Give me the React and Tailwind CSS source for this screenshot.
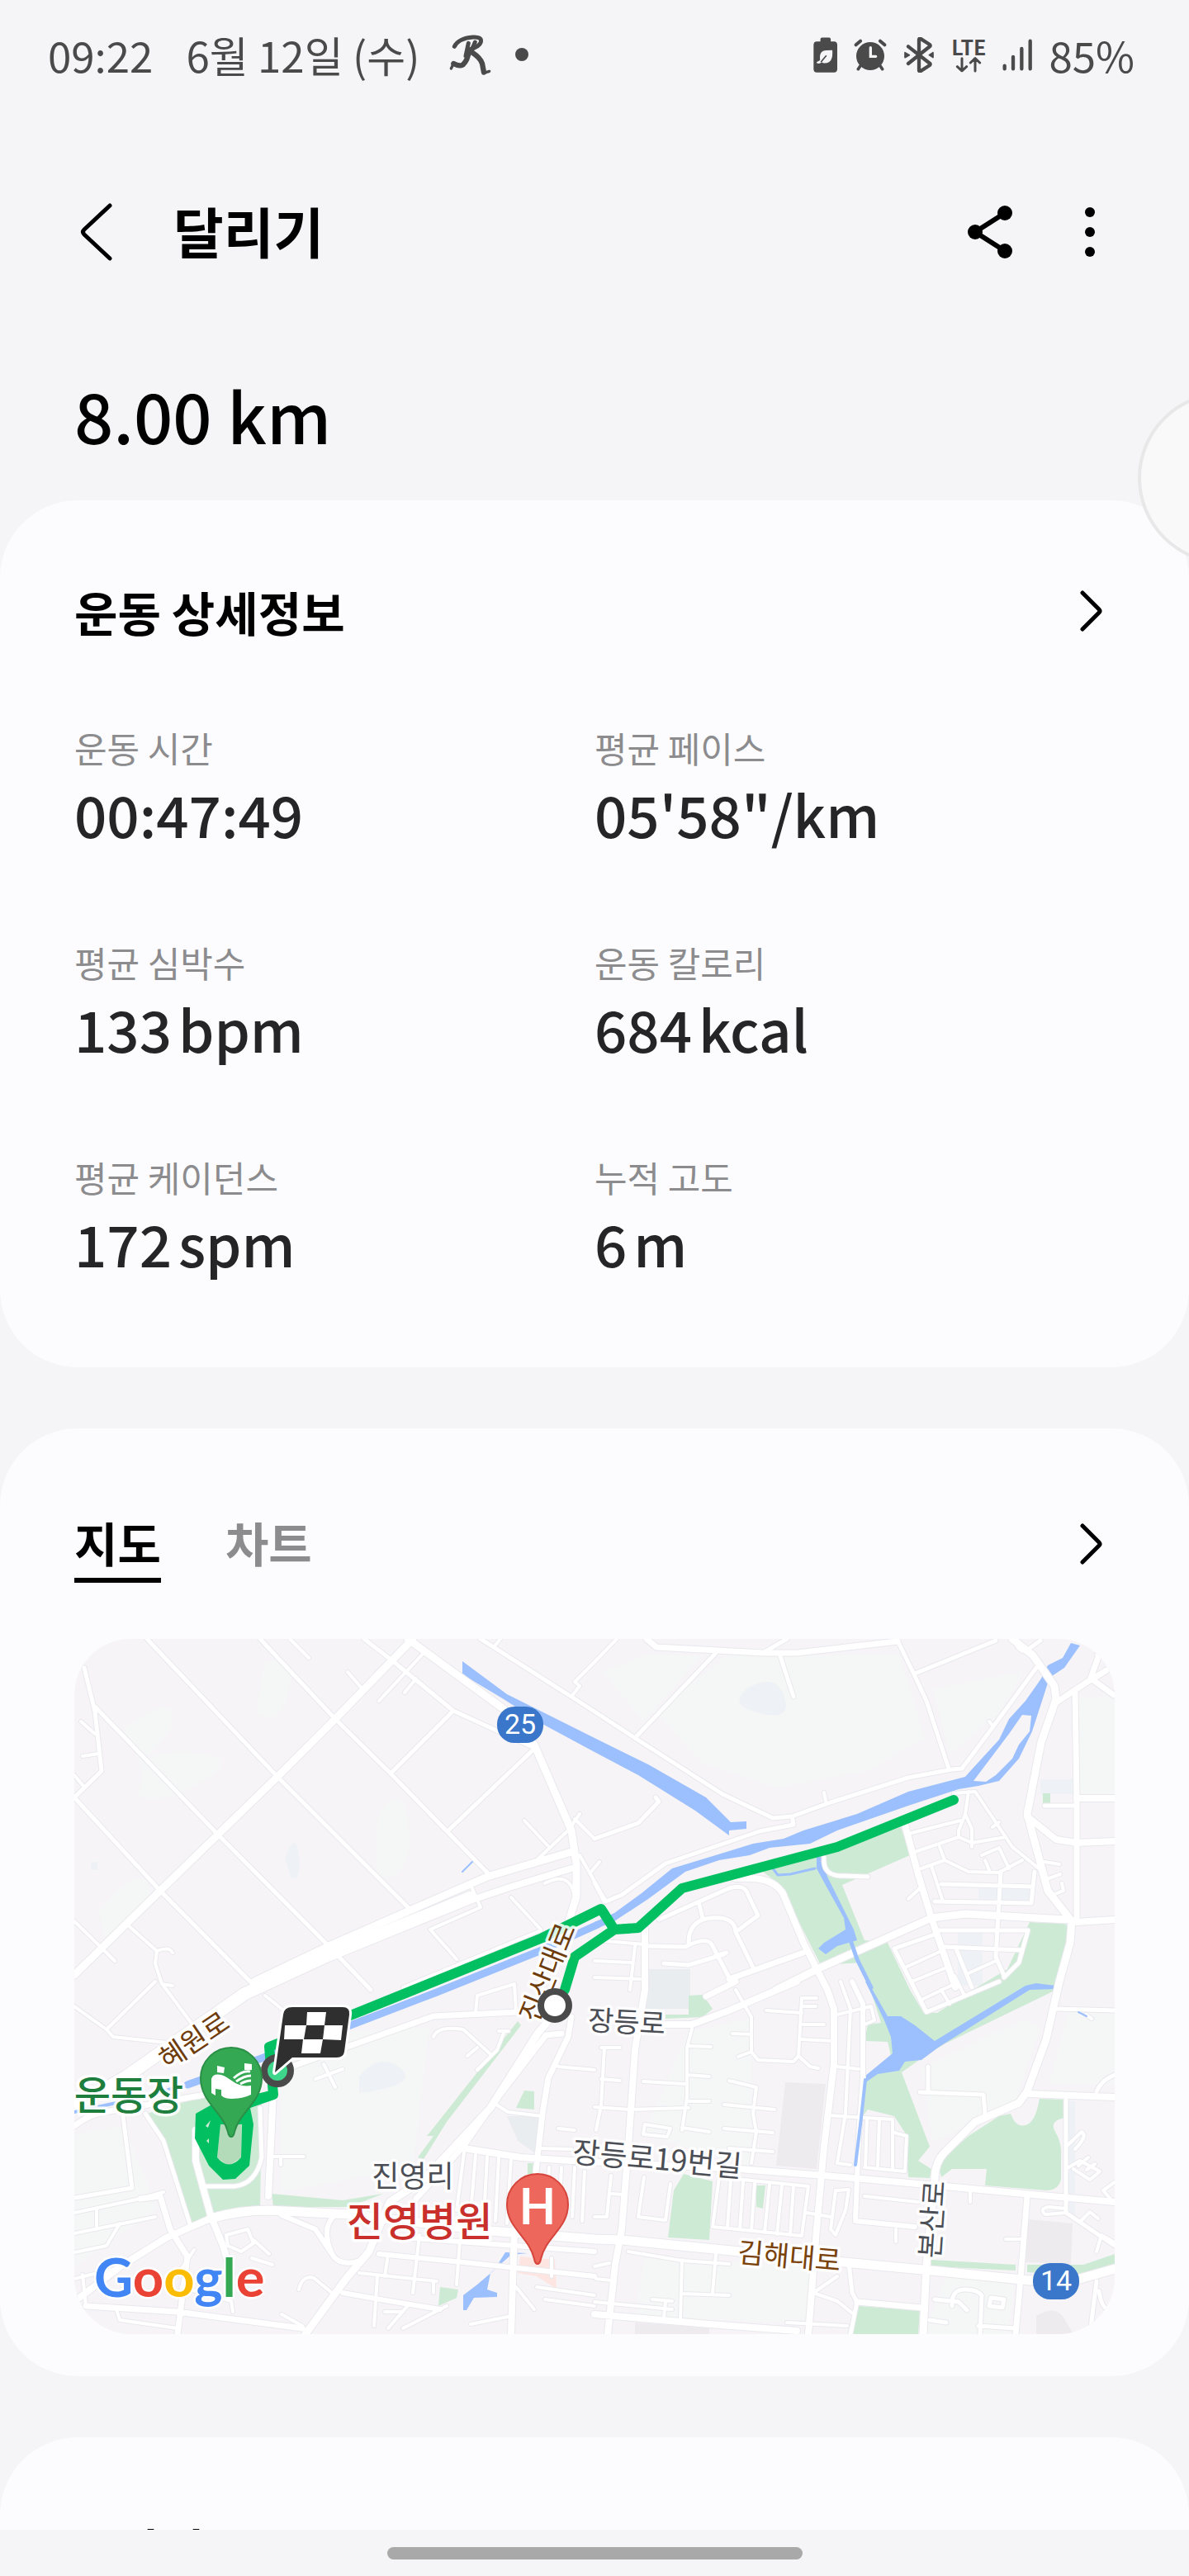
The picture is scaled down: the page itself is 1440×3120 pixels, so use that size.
import { useState } from 'react'

const stats = [
    { label: '운동 시간', value: '00:47:49' },
    { label: '평균 페이스', value: '05\'58"', unit: '/km', tight: true },
    { label: '평균 심박수', value: '133', unit: 'bpm' },
    { label: '운동 칼로리', value: '684', unit: 'kcal' },
    { label: '평균 케이던스', value: '172', unit: 'spm' },
    { label: '누적 고도', value: '6', unit: 'm' },
]

const tabs = [
    { id: 'map', label: '지도' },
    { id: 'chart', label: '차트' },
]

// Map geometry, in the units of the 1260 x 842 map view
const landPatches = [
    { fill: '#f5f6f6', d: 'M60 110Q110 70 118 90T80 150Q110 130 160 140T120 190Q70 200 80 180T60 110ZM230 30Q270 10 260 60T220 90ZM370 210Q400 170 405 230T370 290Q360 260 370 210ZM30 330Q80 270 90 300T40 370Z' },
    { fill: '#f5f6f6', d: 'M705 90L790 20 1000 20 1030 120 960 160 850 180 760 150ZM1040 60L1150 40 1120 90 1060 140ZM1215 70H1260V190H1215ZM640 40L690 20 760 20 690 100Z' },
    { fill: '#f5f6f6', d: 'M744 475L820 460 820 640 690 600ZM1026 520L1150 460 1170 470 1140 560 1040 610ZM690 750L900 760 890 830 680 820ZM1060 760L1140 775 1130 842 1030 842ZM0 600L60 590 100 690 0 760ZM250 480L430 470 410 640 250 670ZM1205 450H1260V540H1180Z' },
    { fill: '#eef2f6', d: 'M815 60Q850 40 860 70T830 90T815 60ZM255 265Q268 230 272 262T262 290ZM1170 170H1215V188H1170ZM1095 300H1160V318H1095ZM1070 350H1100V420H1070ZM345 530Q370 500 395 520T345 550ZM1200 560H1212V700H1200ZM20 270h8v10h-8Z' },
    { fill: '#e9edf0', d: 'M524 578L567 578 561 625 537 608ZM695 400H746V448H690Z' },
    { fill: '#eeebef', d: 'M861 537L910 539 899 642 850 638ZM1154 703L1209 708 1207 757 1152 755ZM679 828L769 834V842H679ZM1165 820Q1190 805 1200 825L1210 842H1165Z' },
    { fill: '#fde5e2', d: 'M540 748L582 752 584 787 560 772 537 768Z' },
]

const parks = [
    'M834 282L908 262 1001 228 1012 262 930 298 957 365 985 368 1012 425 1028 452 1045 453 1093 422 1130 400 1148 362 1157 343 1201 345 1206 362 1189 425 1055 490 1026 508 1002 525 1036 615 1022 632 1038 642 1036 653 1010 652 1006 598 993 578 961 570 952 582 957 532 989 505 985 488 957 487 961 467 977 465 961 415 953 392 904 395 855 298Z',
    'M1134 575Q1140 592 1152 589T1169 557L1199 558V580Q1180 584 1188 597T1195 625V655Q1192 668 1177 668L1103 662 1105 642H1063L1050 652 1046 635 1083 602 1120 578Z',
    'M726 668L738 648 773 657 769 728 719 725Z',
    'M826 662H837L834 690 826 688Z',
    'M950 808L1024 813 1022 842H942Z',
    'M1038 752L1140 758V765L1038 760ZM1154 758L1222 758 1260 745V760L1213 772 1154 767Z',
    'M744 432L761 431 773 448 761 458 716 460V455H744Z',
    'M88 575L153 555 227 562 225 690 165 698 141 708 108 605Z',
    'M537 463L541 468 451 585 423 630 416 628 435 602 427 602 443 582Z',
    'M239 672L325 680 374 672 333 688 241 688Z',
    'M545 547L557 548V570L535 568ZM549 635H559V655H549ZM443 785L465 788 463 798 441 808ZM1173 187H1182V200H1173Z',
]

const water = [
    'M470 27L524 67 630 120 695 152 765 192 795 222 814 221 814 230 793 232 793 238 752 208 683 165 630 137 565 102 520 73 470 43Z',
    'M630 343L654 332 687 308 724 278 793 257 822 248 859 242 883 232 948 212 1010 185 1079 167 1087 158 1120 122 1132 97 1152 75 1171 48 1179 32 1197 23 1207 5 1218 8 1199 35 1181 47 1173 72 1160 112 1144 145 1120 172 1095 178 1071 182 1010 202 924 232 891 248 842 253 818 262 781 268 740 282 695 315 654 342 630 352Z',
    'M899 262V278L912 302 932 338 934 352 908 368 901 375 910 382 924 372 948 365 944 352 912 288 905 265Z',
    'M961 415L985 457 1001 457 1018 468 1042 487 1152 420 1165 417 1189 420V424L1157 425 1046 495 1026 510 1006 512 999 523 973 527 957 538V530L991 502 989 482 981 462 958 415Z',
    'M522 743L508 765 488 782 471 795V813H475L484 798 512 797V792L500 788 504 768 529 746 549 744Z',
]

const streams = [
    { w: 4, d: 'M0 573L60 560 137 540' },
    { w: 9, d: 'M137 540L235 505 337 467 439 428 561 379 634 346' },
    { w: 5, d: 'M940 365L948 388 965 422' },
    { w: 4, d: 'M958 534L953 580 946 637' },
    { w: 3, d: 'M846 278L852 286 867 285 897 278' },
    { w: 2, d: 'M470 282L482 270M1216 452L1226 457' },
]

const roads = [
    { w: 5, d: 'M88 0L246 167 404 325M225 0L316 97 382 162 504 287M12 35L25 88 33 160 0 192 104 305 216 418M25 82L174 237 308 372 359 425' },
    { w: 4, d: 'M8 100L25 115M10 142L29 139M0 165L10 177M331 40L351 63M261 0L284 23M414 48L400 65M425 15L369 75M516 0L508 10' },
    { w: 5, d: 'M351 0L386 27 459 87 553 130M459 87L384 162M555 135L453 232M492 0L602 70 630 88 679 120 785 188 846 217 869 215 916 198 1010 168 1063 158 1075 157 1116 102 1165 35' },
    { w: 4, d: 'M657 0L630 28 606 52 612 57 602 70M545 220L573 250M612 212L598 232 561 267M606 218L630 242M612 262L644 318M636 270L626 282M910 196L908 186M1112 105L1108 100' },
    { w: 4, d: 'M529 313L565 352M492 325L431 352 463 388M398 422L565 353M480 298L492 325M570 296Q600 280 606 312' },
    { w: 4, d: 'M0 342L49 390M63 345L100 378Q115 372 119 380M100 378L98 393 106 418 119 420M98 415L39 473 47 482 121 490M0 445L39 473M108 420L143 467M231 432L251 448' },
    { w: 5, d: 'M834 17L863 0M777 17L679 120M854 18L871 70M997 2L1018 45 1032 75 1059 157M1018 42L1116 2M1156 12L1170 2M1138 0Q1144 18 1155 14' },
    { w: 7, d: 'M693 0L705 10 834 17 875 17 997 3M1189 77L1230 50 1240 22V0M1234 50L1259 68M1234 48L1250 38M1212 65L1214 192V338' },
    { w: 5, d: 'M644 318L663 310 716 272 830 233 871 225 869 215M630 242L683 223 708 197 704 192M630 295L642 318M1175 202H1212' },
    { w: 4, d: 'M1014 235L1073 220M1018 258L1071 240 1087 247 1128 240M1083 185L1079 212 1071 232V240M1079 212L1087 230V252M1065 187L1091 185 1136 252 1173 282M1048 252L1054 268 1083 282 1120 283 1148 268M1026 278L1054 268M1038 275L1052 318M1099 262L1120 253 1132 278M1103 268L1108 280M1112 228L1120 222' },
    { w: 5, d: 'M1122 282L1116 385 1126 408M1050 297L1161 300 1159 320 1042 318M1163 282L1161 300M1042 353H1155L1144 392 1126 410M1054 373L1148 377M1067 373L1087 422M1042 358L993 375 1032 452 1120 415' },
    { w: 4, d: 'M1006 398L1050 378M1014 415L1059 397M1083 405L1116 390M1010 315L1024 302M1024 438L1070 416M1050 425L1060 442M1066 408L1078 432M1175 270L1193 273M1180 290L1194 285M1185 310L1198 305 1196 296' },
    { w: 5, d: 'M908 265Q906 288 932 287L961 288M708 340L793 302Q812 296 816 310L828 335 801 355M744 368Q744 340 772 338T801 355L822 398M757 322L761 338M695 372L740 373Q765 360 772 370L797 418M714 393L744 395 787 382M776 384L790 380' },
    { w: 4, d: 'M630 365L691 370M630 390L675 392M630 410L685 412M679 372L673 425' },
    { w: 7, d: 'M793 412L883 380M765 433L801 415' },
    { w: 4, d: 'M748 472L742 495V555L736 595M744 493L771 494M742 528L769 530M689 536L740 539M742 560H769M673 570L744 568M691 588L722 593 718 603 689 600ZM736 592L769 597M638 495H661M642 495L638 565 632 595M638 533L661 535M630 567L673 570' },
    { w: 4, d: 'M801 425L820 458V500L828 510 871 512 877 505 881 435H899M838 450L881 453M797 478L820 479M804 506L820 500M883 467H908M881 485L918 487M877 505L891 518 901 520M793 535L826 543 822 575 826 597 820 635M787 564L848 570M787 593L846 598M793 617L846 621M881 445H898' },
    { w: 4, d: 'M781 652L773 712 881 723 889 663ZM795 655L791 713M810 657L806 715M824 659L820 717M842 661L836 719M857 662L851 721M871 663L867 722M887 695L916 700M922 668L938 667 934 692 922 722 916 715ZM690 652L683 700 716 704 722 660M650 650L645 700H630M651 672L665 673' },
    { w: 6, d: 'M942 415L955 442V532L950 602 946 705 1018 712' },
    { w: 4, d: 'M928 415L940 448 934 575 924 635 940 637M924 455L965 445 969 462 957 467M924 518L950 521M912 577L991 582V642M975 582L973 638M993 598L1008 602 1006 645 957 640M957 675L1022 682M958 640L960 582' },
    { w: 5, d: 'M1024 549L1101 552 1103 575M1034 518V548M1189 448L1260 450M1260 528Q1244 534 1238 548M1201 558V695L1260 735' },
    { w: 4, d: 'M1201 615L1220 597Q1228 602 1212 618M1201 642L1218 632 1242 645 1230 655 1210 642M1216 638L1228 628M1226 643L1236 636M1260 658L1246 668 1260 684M1201 695L1176 697Q1168 690 1180 688L1201 690M1218 706L1230 694 1240 702M1238 742L1244 722 1258 730M1225 455L1232 460M1085 668V682M995 715V730M1128 727H1148' },
    { w: 4, d: 'M736 752L734 825M671 742L736 753 793 757M777 745L773 792M736 793L793 795M630 803L724 812M716 803L714 822M700 800L724 802M924 772L895 792 924 802 944 818M863 828L936 832M630 760L648 756M632 775L650 777' },
    { w: 5, d: 'M938 755L942 792 948 803 940 842M1063 808Q1062 788 1078 788T1099 795L1097 842M1042 800L1071 803 1081 813M1110 798L1126 800 1124 810 1108 808ZM1095 832L1140 835M1238 778L1230 842M1241 790Q1244 810 1252 812M1036 825L1056 828' },
    { w: 5, d: 'M59 578L70 665 0 677M225 568L227 628Q220 660 194 663H157M86 575L108 608 141 712' },
    { w: 4, d: 'M241 627H278M250 627V637M292 533L325 521M302 515L316 543M486 452L488 432 533 418 535 452M435 482Q440 468 471 473L504 503M476 505L488 495M521 475L512 498 488 522M514 475H526M508 562L525 573 567 578M586 518L630 522M586 593L606 595M561 617L602 618' },
    { w: 4, d: 'M472 622L463 692M486 625L480 695M500 627L496 700M514 628L510 705M529 629L524 708M575 640L572 700M590 640L587 700M606 640L603 700M618 645L615 705' },
    { w: 4, d: 'M418 722L410 792M467 728L463 782M345 768L439 778M435 778V792M451 808L398 835M367 772L363 832M406 805L380 835M535 785L557 812M578 750V772M560 785L630 795M570 800L630 808M380 745L376 772M376 815H398M480 830L530 820' },
    { w: 6, d: 'M251 698L292 715 312 745Q322 762 349 752M316 698Q298 712 312 745M369 745L471 755 630 772M398 725L630 742M325 792L382 802 443 812' },
    { w: 4, d: 'M0 695L80 678 108 670M27 692V715M0 720L98 700M0 743L39 735 55 708M14 808L10 770M51 812L55 825 125 835M129 785L190 802 192 815M251 818L276 832M184 722L210 715 217 732 202 742 186 735ZM217 728L236 745M215 750L240 758M272 788Q276 770 290 774L312 792M125 770L145 740M0 775L60 760' },
    { w: 7, d: 'M80 678L104 675 116 715 137 748 125 842M14 808L125 815 276 835M1154 675L1146 775 1140 842M948 803L1026 810' },
    { w: 7, d: 'M590 478L571 480 508 562 471 615 414 678M602 458L598 482 574 532 567 575 559 645M0 590Q20 574 43 572L153 553 235 528 435 457 537 452' },
    { w: 8, d: 'M147 595V632L165 698 180 735 190 768M165 702L112 725 59 758 6 798M241 548L235 675' },
    { w: 8, d: 'M1006 225L1022 285 1038 338 1067 422M1154 215L1189 243 1214 247 1260 245M1214 193H1260M1214 343L1260 340M1157 551L1260 555' },
    { w: 8, d: 'M691 352V425L679 498 671 615 663 715 655 758 646 842M716 467H748L793 450 875 415M472 617L541 628 602 632 806 642 908 650 1022 660 1161 673 1260 682M630 818L769 830 875 838' },
    { w: 8, d: 'M800 290H818Q846 290 858 308L883 368 912 425 920 448V515L908 615 899 715 889 842M533 715L529 842' },
    { w: 9, d: 'M1136 0L1161 20 1187 57 1189 73 1171 125 1154 212 1171 275 1179 305 1208 342 1206 368 1193 415 1177 485 1154 548 1144 562 1091 585 1054 622Q1042 634 1042 655L1032 758 1028 842M850 425L904 398 1038 338 1079 333 1201 340' },
    { w: 9, d: 'M410 0L316 97 246 167 174 237 104 305 63 345 0 407M404 0L520 85 557 128 602 232 608 272V312L598 345' },
    { w: 9, d: 'M218 415L308 372 500 288 602 258M578 458L561 478 504 568 423 655 382 682 357 742 329 775 280 842' },
    { w: 11, d: 'M165 702Q200 692 235 692L333 697 504 717 630 727 663 728 806 742 932 755 1038 765 1157 777 1218 775 1260 763' },
    { w: 15, d: 'M0 566L63 530 206 430 308 383 480 313' },
    { w: 8, d: 'M440 330L530 300 602 278' },
]

const route = 'M1065 195L924 252 736 302 683 350 654 352 638 327 567 362 337 455 236 494 241 552 200 566M654 352L606 385 594 425'

const mapLabels = [
    { text: '혜원로', x: 145, y: 486, rotate: -34, tone: 'fill-[#6e3c0b]', size: 'text-[34px]' },
    { text: '진산대로', x: 573, y: 404, rotate: -68, tone: 'fill-[#6e3c0b]', size: 'text-[34px]' },
    { text: '김해대로', x: 866, y: 748, rotate: 5, tone: 'fill-[#7a430c]', size: 'text-[34px]' },
    { text: '장등로', x: 669, y: 464, rotate: 3, tone: 'fill-[#4b4f55]', size: 'text-[34px]' },
    { text: '장등로19번길', x: 706, y: 630, rotate: 5, tone: 'fill-[#4b4f55]', size: 'text-[36px]' },
    { text: '본산로', x: 1039, y: 703, rotate: -86, tone: 'fill-[#4b4f55]', size: 'text-[34px]' },
    { text: '진영리', x: 410, y: 651, rotate: 0, tone: 'fill-[#4b4f55]', size: 'text-[36px]' },
    { text: '운동장', x: 66, y: 553, rotate: 0, tone: 'fill-[#1e7e3e] font-medium', size: 'text-[48px]' },
    { text: '진영병원', x: 418, y: 706, rotate: 0, tone: 'fill-[#c9302b] font-medium', size: 'text-[48px]' },
]

const googleLetters = [
    ['G', 'fill-[#4285f4]'],
    ['o', 'fill-[#ea4335]'],
    ['o', 'fill-[#fbbc05]'],
    ['g', 'fill-[#4285f4]'],
    ['l', 'fill-[#34a853]'],
    ['e', 'fill-[#ea4335]'],
]

function StatusBar() {
    return (
        <div className="flex h-[136px] shrink-0 items-center justify-between pb-1 pl-[58px] pr-[66px] text-[51px] leading-[60px] text-[#4a4a4a]">
            <div className="flex items-center">
                <span>09:22</span>
                <span className="ml-10">6월 12일 (수)</span>
                <svg className="ml-9 h-[50px] w-[52px]" viewBox="38 36 156 150" fill="none" stroke="currentColor" strokeLinecap="round" strokeLinejoin="round">
                    <path d="M57 82Q72 52 124 48Q158 46 153 66Q148 84 108 94" strokeWidth="15" />
                    <path d="M108 70L98 116M132 66Q126 84 118 94" strokeWidth="15" />
                    <path d="M110 96Q106 132 88 148Q76 156 54 144M122 104Q152 124 158 144L164 176" strokeWidth="19" />
                    <path d="M54 144L45 162M164 178L184 172" strokeWidth="10" />
                </svg>
                <span className="ml-7 size-4 rounded-full bg-[#4a4a4a]" />
            </div>
            <div className="flex items-center gap-5">
                <svg className="h-[43px] w-[29px]" viewBox="68 47 88 129" fill="currentColor">
                    <path d="M94 54Q94 48 100 48H126Q132 48 132 54V62H144Q156 62 156 75V163Q156 176 144 176H81Q69 176 69 163V75Q69 62 81 62H94Z" />
                    <path d="M138 94Q142 144 108 142Q104 142 100 139Q90 146 81 142Q78 138 84 136Q90 134 93 130Q88 96 116 95Z" fill="#f5f5f7" />
                    <path d="M96 138Q104 128 116 114" fill="none" stroke="currentColor" strokeWidth="5" />
                </svg>
                <svg className="h-[39px] w-[40px]" viewBox="222 54 120 117" fill="currentColor" stroke="currentColor" strokeLinecap="round">
                    <circle cx="282" cy="117" r="51" stroke="none" />
                    <path d="M230 76L246 62M318 62L334 76" strokeWidth="12" />
                    <path d="M246 152L238 164M318 152L326 164" strokeWidth="11" />
                    <path d="M283 86V118H302" fill="none" stroke="#f5f5f7" strokeWidth="10" />
                </svg>
                <svg className="h-[43px] w-[38px]" viewBox="401 48 112 129" fill="none" stroke="currentColor" strokeLinecap="round" strokeLinejoin="round">
                    <path d="M418 82L497 144Q499 147 496 150L462 172Q457 173 457 168V57Q457 52 462 53L496 75Q499 78 497 81L418 144" strokeWidth="13" />
                    <path d="M406 104L422 113 406 122ZM508 104L494 113 508 122Z" fill="currentColor" strokeWidth="5" />
                </svg>
                <span className="flex flex-col items-center">
                    <span className="text-[25px] font-bold leading-6">LTE</span>
                    <svg className="h-5 w-8" viewBox="0 0 96 60" fill="none" stroke="currentColor" strokeWidth="9" strokeLinecap="round" strokeLinejoin="round">
                        <path d="M24 8V53M7 38L24 54 41 38M72 54V8M55 24L72 8 89 24" />
                    </svg>
                </span>
                <svg className="h-[39px] w-9" viewBox="757 52 108 117" fill="none" stroke="currentColor" strokeWidth="13" strokeLinecap="round">
                    <path d="M765 150V161M796 118V161M827 88V161M858 60V161" />
                </svg>
                <span>85%</span>
            </div>
        </div>
    )
}

function Chevron() {
    return (
        <svg className="h-[52px] w-[30px]" viewBox="0 0 30 52" fill="none" stroke="currentColor" strokeWidth="5" strokeLinecap="round" strokeLinejoin="round">
            <path d="M3 4L23 24Q25 26 23 28L3 48" />
        </svg>
    )
}

function AppBar() {
    return (
        <header className="flex h-[290px] items-center px-[90px] text-black">
            <button type="button" aria-label="뒤로" className="px-1.5">
                <svg className="h-[72px] w-[42px]" viewBox="0 0 42 72" fill="none" stroke="currentColor" strokeWidth="5" strokeLinecap="round" strokeLinejoin="round">
                    <path d="M37 4L6 33Q3 36 6 39L37 68" />
                </svg>
            </button>
            <h1 className="ml-[66px] pb-1.5 text-[66px] font-bold leading-[80px]">달리기</h1>
            <button type="button" aria-label="공유" className="ml-auto">
                <svg className="h-16 w-[58px]" viewBox="0 0 58 64" fill="currentColor">
                    <path d="M47 9L11 32 47 55" fill="none" stroke="currentColor" strokeWidth="6" />
                    <circle cx="47" cy="9" r="9" />
                    <circle cx="11" cy="32" r="9" />
                    <circle cx="47" cy="55" r="9" />
                </svg>
            </button>
            <button type="button" aria-label="더보기" className="ml-20 pr-[18px]">
                <svg className="h-16 w-6" viewBox="0 0 24 64" fill="currentColor">
                    <circle cx="12" cy="8" r="6" />
                    <circle cx="12" cy="32" r="6" />
                    <circle cx="12" cy="56" r="6" />
                </svg>
            </button>
        </header>
    )
}

function Stat({ label, value, unit, tight }) {
    return (
        <div>
            <dt className="text-[43px] leading-[60px] text-[#8c8c8e]">{label}</dt>
            <dd className={`flex items-baseline text-[69px] font-medium leading-[100px] text-[#252527] ${tight ? 'gap-0' : 'gap-2'}`}>
                <span>{value}</span>
                {unit && <span>{unit}</span>}
            </dd>
        </div>
    )
}

function Shield({ x, y, children }) {
    return (
        <g>
            <rect x={x - 28} y={y - 22} width="56" height="44" rx="21" fill="#3a76c9" />
            <text x={x} y={y + 11} textAnchor="middle" className="fill-white font-['Roboto',sans-serif] text-[34px]">{children}</text>
        </g>
    )
}

function RouteMap() {
    return (
        <svg className="block w-full rounded-[68px]" viewBox="0 0 1260 842" role="img" aria-label="운동 경로 지도">
            <rect width="1260" height="842" fill="#f7f4f7" />
            {landPatches.map((patch) => <path key={patch.d} d={patch.d} fill={patch.fill} />)}
            {parks.map((d) => <path key={d} d={d} fill="#cdead5" />)}
            {water.map((d) => <path key={d} d={d} fill="#9cc0fd" />)}
            <path d="M1089 172L1132 115 1148 92 1159 93 1157 112 1144 128 1136 145 1116 165 1104 173Z" fill="#f7f4f7" />
            <g fill="none" strokeLinejoin="round" strokeLinecap="round">
                {roads.map((r) => <path key={r.d} d={r.d} stroke="#e9e8ed" strokeWidth={r.w + 2} />)}
                {roads.map((r) => <path key={r.d} d={r.d} stroke="#ffffff" strokeWidth={r.w} />)}
                {streams.map((s) => <path key={s.d} d={s.d} stroke="#9cc0fd" strokeWidth={s.w} />)}
                <path d={route} stroke="#02c062" strokeWidth="12" />
            </g>

            {/* laps round the stadium track */}
            <path d="M177 588L202 588V628L187 638 173 628Z" fill="#b3dbb9" />
            <path fillRule="evenodd" fill="#02c062" d="M147 575L170 562 200 556 246 545V554L213 568 217 588 212 638 195 654 180 655 163 638 146 605ZM177 588L173 628Q187 645 202 628L203 588Z" />
            <path d="M159 590L165 583 162 592ZM160 608L163 605V611Z" fill="#cdead5" />

            <g className="font-['Noto_Sans_CJK_KR',sans-serif]" textAnchor="middle">
                {mapLabels.map((l) => (
                    <text key={l.text} x={l.x} y={l.y} dy="0.36em" transform={`rotate(${l.rotate} ${l.x} ${l.y})`}
                        className={`stroke-white/85 stroke-[7px] [paint-order:stroke] [stroke-linejoin:round] ${l.tone} ${l.size}`}>
                        {l.text}
                    </text>
                ))}
            </g>

            <Shield x={540} y={104}>25</Shield>
            <Shield x={1189} y={778}>14</Shield>

            {/* start point */}
            <circle cx="582" cy="444" r="17" fill="#ffffff" stroke="#4a4a4a" strokeWidth="8" />

            {/* finish point and flag */}
            <circle cx="246" cy="523" r="16" fill="#3ed68b" stroke="#4a4a4a" strokeWidth="8" />
            <path d="M264 446H325Q334 446 333 455L327 500Q326 507 318 507H264L243 525 253 455Q254 446 264 446Z" fill="#2f2f2f" stroke="#ffffff" strokeWidth="6" strokeLinejoin="round" paintOrder="stroke" />
            <path d="M282 452H305L303 468H281ZM255 468H281L278 485H254ZM303 468H325L323 486 301 485ZM277 485H301L298 502H275Z" fill="#ffffff" />

            {/* stadium pin */}
            <path d="M190 603Q187 603 186 597C180 573 153 561 153 532A37 37 0 0 1 227 532C227 561 200 573 194 597Q193 603 190 603Z" fill="#34a853" stroke="#2b8f47" strokeWidth="2" />
            <path d="M173 517L182 519 181 526 173 525ZM206 514L215 515V522H206ZM166 533Q168 526 178 528C190 532 196 544 214 541V552Q204 557 190 557 182 557 178 553V546L171 545V553L166 550Z" fill="#ffffff" />
            <path d="M193 532Q204 522 213 524M196 536Q206 529 214 529M201 539Q208 535 214 535" fill="none" stroke="#ffffff" strokeWidth="3" />

            {/* hospital pin */}
            <path d="M561 757Q558 757 557 751C551 724 524 714 524 685A37 37 0 0 1 598 685C598 714 571 724 565 751Q564 757 561 757Z" fill="#ee675c" stroke="#d6453b" strokeWidth="2" />
            <text x="561" y="709" textAnchor="middle" className="fill-white font-['Roboto',sans-serif] text-[62px] font-medium">H</text>

            <text x="24" y="797" className="stroke-white stroke-[5px] font-['Lato',sans-serif] text-[65px] font-bold [paint-order:stroke] [stroke-linejoin:round]">
                {googleLetters.map(([letter, fill], i) => <tspan key={i} className={fill}>{letter}</tspan>)}
            </text>
        </svg>
    )
}

export default function App() {
    const [tab, setTab] = useState('map')

    return (
        <div className="relative flex h-screen flex-col overflow-hidden bg-[#f5f5f7] font-['Noto_Sans_CJK_KR',sans-serif]">
            <StatusBar />

            <main className="min-h-0 flex-1 overflow-y-auto [scrollbar-width:none]">
                <AppBar />
                <p className="h-[180px] px-[90px] pt-4 text-[83px] font-medium leading-[120px] text-black">8.00 km</p>

                <div className="flex flex-col gap-[74px]">
                    <section className="rounded-[94px] bg-[#fcfcfe] px-[90px] pb-[101px] pt-[94px]">
                        <div className="flex items-center justify-between pr-3">
                            <h2 className="text-[57px] font-bold leading-[80px]">운동 상세정보</h2>
                            <button type="button" aria-label="운동 상세정보 보기"><Chevron /></button>
                        </div>
                        <dl className="mt-[95px] grid grid-cols-2 gap-y-[100px]">
                            {stats.map((s) => <Stat key={s.label} {...s} />)}
                        </dl>
                    </section>

                    <section className="rounded-[94px] bg-[#fcfcfe] px-[90px] pb-[51px] pt-[101px]">
                        <div className="flex items-center justify-between pr-3">
                            <div role="tablist" className="flex gap-[78px]">
                                {tabs.map((t) => (
                                    <button key={t.id} type="button" role="tab" aria-selected={tab === t.id} onClick={() => setTab(t.id)}
                                        className={`border-b-6 pb-2 text-[57px] font-bold leading-[72px] ${tab === t.id ? 'border-black text-black' : 'border-transparent text-[#8c8c8e]'}`}>
                                        {t.label}
                                    </button>
                                ))}
                            </div>
                            <button type="button" aria-label="지도 크게 보기" className="pb-2"><Chevron /></button>
                        </div>
                        <div className="mt-[68px]">
                            <RouteMap />
                        </div>
                    </section>

                    <section className="rounded-t-[94px] bg-[#fcfcfe] px-[90px] pb-[84px] pt-[94px]">
                        <h2 className="text-[57px] font-bold leading-[80px]">구간기록</h2>
                    </section>
                </div>
            </main>

            <div className="flex h-14 shrink-0 items-center justify-center">
                <span className="h-[15px] w-[503px] rounded-full bg-[#a9a9a9]" />
            </div>

            {/* edge panel handle, mostly off screen */}
            <div className="absolute -right-[146px] top-[475px] size-[208px] rounded-full border-4 border-[#e8e8e9] bg-[#f9f9fa]" />
        </div>
    )
}
